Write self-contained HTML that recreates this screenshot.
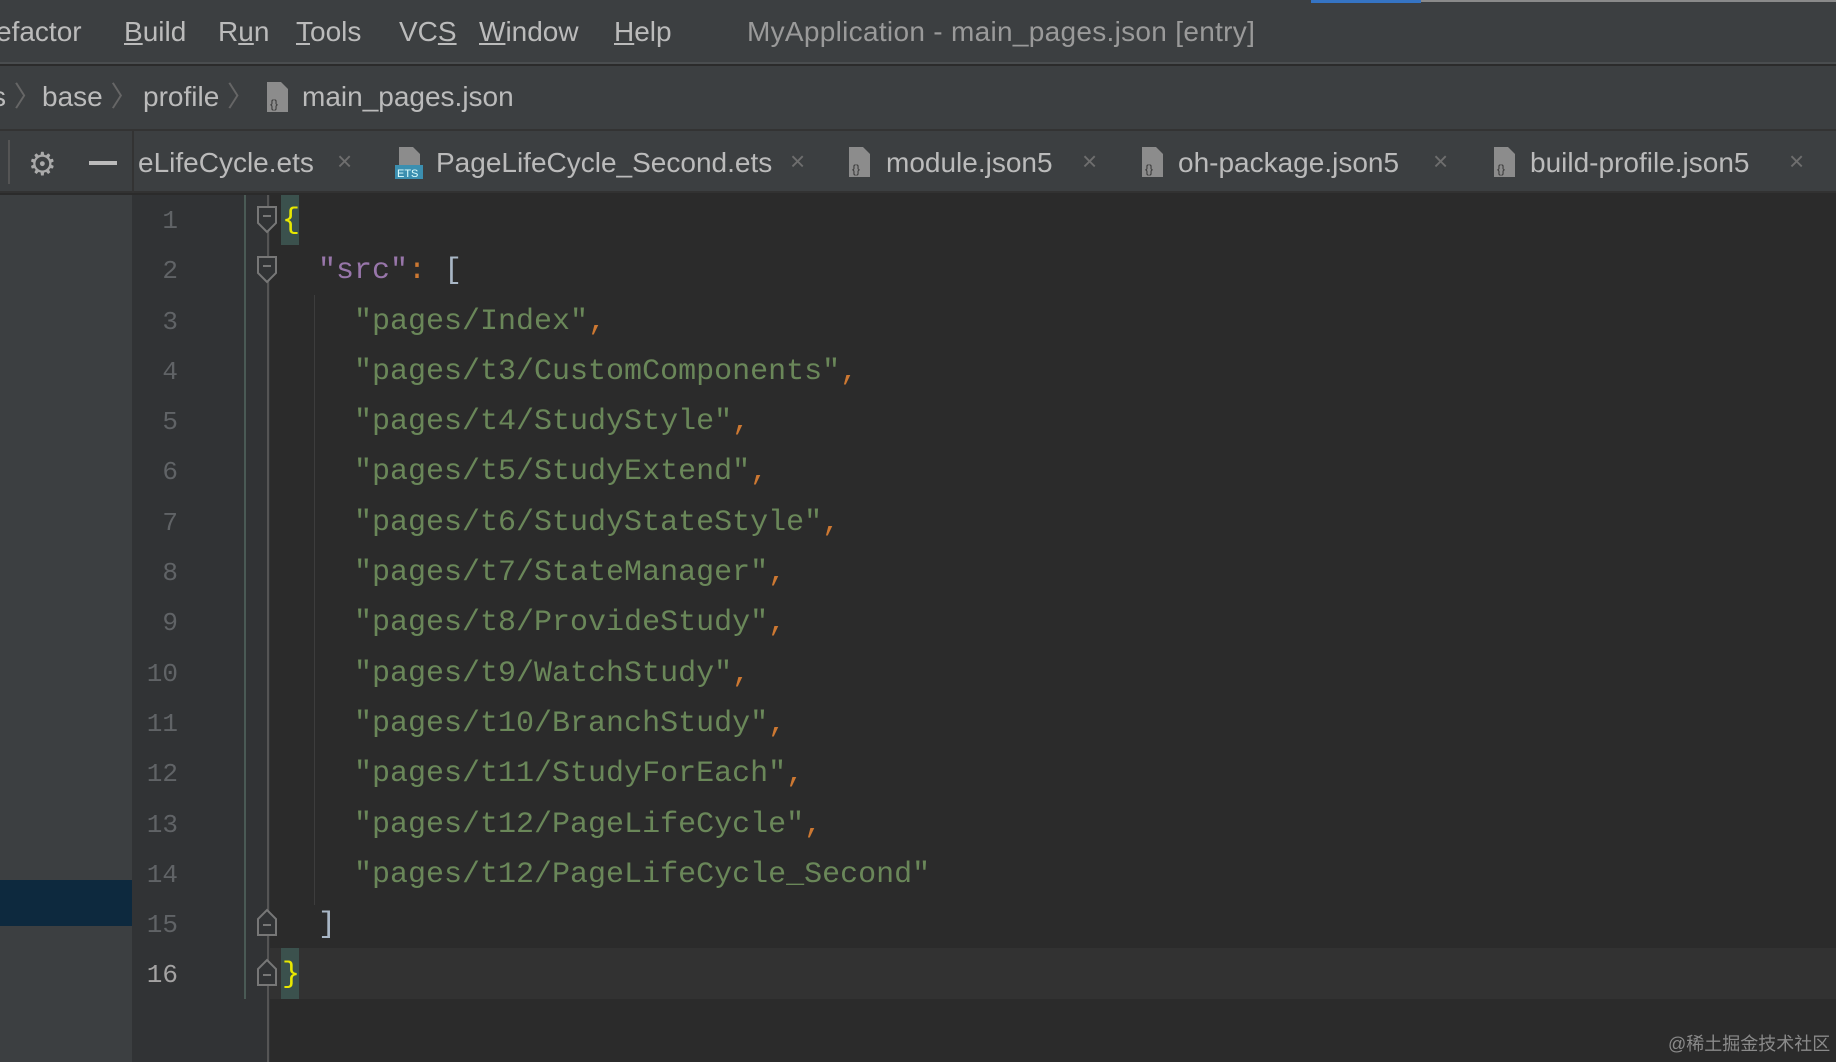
<!DOCTYPE html>
<html><head><meta charset="utf-8"><style>
*{margin:0;padding:0;box-sizing:border-box}
body{width:1836px;height:1062px;overflow:hidden;background:#2b2b2b;font-family:"Liberation Sans",sans-serif;position:relative}
.a{position:absolute;white-space:nowrap}
.ui{color:#bbbbbb;font-size:28px;line-height:34px}
.code{font-family:"Liberation Mono",monospace;font-size:30px;line-height:50.3px;white-space:pre}
.ln{color:#606366;font-family:"Liberation Mono",monospace;font-size:26px;width:60px;text-align:right}
.s{color:#6a8759}.k{color:#9876aa}.p{color:#a9b7c6}.c{color:#cc7832}
.x{color:#6e6e6e;font-size:26px}
u{text-decoration:underline}
</style></head><body>
<div class="a" style="left:0;top:0;width:1836px;height:64px;background:#3c3f41;border-bottom:2px solid #4a4d4f"></div>
<div class="a" style="left:1311px;top:0;width:110px;height:3px;background:#3574c4"></div>
<div class="a" style="left:1421px;top:0;width:415px;height:2px;background:#8a8a8a"></div>
<div class="a ui" style="left:-4px;top:15px">efactor</div>
<div class="a ui" style="left:124px;top:15px"><u>B</u>uild</div>
<div class="a ui" style="left:218px;top:15px">R<u>u</u>n</div>
<div class="a ui" style="left:296px;top:15px"><u>T</u>ools</div>
<div class="a ui" style="left:399px;top:15px">VC<u>S</u></div>
<div class="a ui" style="left:479px;top:15px"><u>W</u>indow</div>
<div class="a ui" style="left:614px;top:15px"><u>H</u>elp</div>
<div class="a ui" style="left:747px;top:15px;color:#9a9a9a;letter-spacing:0.3px">MyApplication - main_pages.json [entry]</div>

<div class="a" style="left:0;top:66px;width:1836px;height:65px;background:#3c3f41;border-bottom:2px solid #333"></div>
<div class="a ui" style="left:-8px;top:80px">s <span style="color:#666">〉</span></div>
<div class="a ui" style="left:42px;top:80px">base <span style="color:#666">〉</span></div>
<div class="a ui" style="left:143px;top:80px">profile <span style="color:#666">〉</span></div>
<svg class="a" style="left:263px;top:80px" width="30" height="34"><path d="M4 2h14l7 7v23H4z" fill="#8c8c8c"/><text x="7" y="28" font-size="12" fill="#333" font-family="Liberation Sans">{}</text></svg>
<div class="a ui" style="left:302px;top:80px">main_pages.json</div>

<div class="a" style="left:0;top:131px;width:1836px;height:62px;background:#3c3f41;border-bottom:2px solid #323232"></div>
<div class="a" style="left:8px;top:140px;width:2px;height:44px;background:#555"></div>
<div class="a" style="left:28px;top:145px;color:#aaa;font-size:32px">⚙</div>
<div class="a" style="left:89px;top:161px;width:28px;height:4px;background:#bbb"></div>
<div class="a" style="left:132px;top:131px;width:2px;height:62px;background:#333"></div>
<div class="a ui" style="left:138px;top:146px">eLifeCycle.ets</div><div class="a x" style="left:337px;top:146px">×</div>
<svg class="a" style="left:393px;top:145px" width="32" height="36"><path d="M6 2h14l7 7v14H6z" fill="#8c8c8c"/><rect x="2" y="20" width="28" height="14" fill="#3b8fb0"/><text x="4" y="32" font-size="11" fill="#dff" font-family="Liberation Sans">ETS</text></svg>
<div class="a ui" style="left:436px;top:146px">PageLifeCycle_Second.ets</div><div class="a x" style="left:790px;top:146px">×</div>
<svg class="a" style="left:845px;top:145px" width="30" height="34"><path d="M4 2h14l7 7v23H4z" fill="#8c8c8c"/><text x="7" y="28" font-size="12" fill="#333" font-family="Liberation Sans">{}</text></svg>
<div class="a ui" style="left:886px;top:146px">module.json5</div><div class="a x" style="left:1082px;top:146px">×</div>
<svg class="a" style="left:1138px;top:145px" width="30" height="34"><path d="M4 2h14l7 7v23H4z" fill="#8c8c8c"/><text x="7" y="28" font-size="12" fill="#333" font-family="Liberation Sans">{}</text></svg>
<div class="a ui" style="left:1178px;top:146px">oh-package.json5</div><div class="a x" style="left:1433px;top:146px">×</div>
<svg class="a" style="left:1490px;top:145px" width="30" height="34"><path d="M4 2h14l7 7v23H4z" fill="#8c8c8c"/><text x="7" y="28" font-size="12" fill="#333" font-family="Liberation Sans">{}</text></svg>
<div class="a ui" style="left:1530px;top:146px">build-profile.json5</div><div class="a x" style="left:1789px;top:146px">×</div>

<div class="a" style="left:0;top:195px;width:132px;height:867px;background:#3c3f41"></div>
<div class="a" style="left:0;top:880px;width:132px;height:46px;background:#0d293e"></div>
<div class="a" style="left:132px;top:195px;width:138px;height:867px;background:#313335"></div>
<div class="a" style="left:270px;top:948px;width:1566px;height:51px;background:#323232"></div>
<div class="a" style="left:244px;top:195px;width:2px;height:804px;background:#4a5a55"></div>
<div class="a" style="left:267px;top:195px;width:2px;height:867px;background:#555"></div>
<div class="a" style="left:314px;top:295px;width:1px;height:610px;background:#3d3d3d"></div>
<svg class="a" style="left:256px;top:205px" width="24" height="30"><path d="M2 2h18v16l-9 9-9-9z" fill="#313335" stroke="#777" stroke-width="2"/><path d="M7 11h8" stroke="#777" stroke-width="2"/></svg>
<svg class="a" style="left:256px;top:255px" width="24" height="30"><path d="M2 2h18v16l-9 9-9-9z" fill="#313335" stroke="#777" stroke-width="2"/><path d="M7 11h8" stroke="#777" stroke-width="2"/></svg>
<svg class="a" style="left:256px;top:907px" width="24" height="30"><path d="M2 28h18V12l-9-9-9 9z" fill="#313335" stroke="#777" stroke-width="2"/><path d="M7 18h8" stroke="#777" stroke-width="2"/></svg>
<svg class="a" style="left:256px;top:957px" width="24" height="30"><path d="M2 28h18V12l-9-9-9 9z" fill="#313335" stroke="#777" stroke-width="2"/><path d="M7 18h8" stroke="#777" stroke-width="2"/></svg>
<div class="a" style="left:281px;top:195px;width:18px;height:50px;background:#3b514d"></div>
<div class="a" style="left:281px;top:948px;width:18px;height:51px;background:#3b514d"></div>

<div class="a" style="left:118px;top:196px">
<div class="ln" style="line-height:50.3px">1<br>2<br>3<br>4<br>5<br>6<br>7<br>8<br>9<br>10<br>11<br>12<br>13<br>14<br>15<br><span style="color:#a4a3a3">16</span></div>
</div>
<div class="a code" style="left:282px;top:196px"><span style="color:#e8e800">{</span>
  <span class="k">"src"</span><span class="c">:</span> <span class="p">[</span>
    <span class="s">"pages/Index"</span><span class="c">,</span>
    <span class="s">"pages/t3/CustomComponents"</span><span class="c">,</span>
    <span class="s">"pages/t4/StudyStyle"</span><span class="c">,</span>
    <span class="s">"pages/t5/StudyExtend"</span><span class="c">,</span>
    <span class="s">"pages/t6/StudyStateStyle"</span><span class="c">,</span>
    <span class="s">"pages/t7/StateManager"</span><span class="c">,</span>
    <span class="s">"pages/t8/ProvideStudy"</span><span class="c">,</span>
    <span class="s">"pages/t9/WatchStudy"</span><span class="c">,</span>
    <span class="s">"pages/t10/BranchStudy"</span><span class="c">,</span>
    <span class="s">"pages/t11/StudyForEach"</span><span class="c">,</span>
    <span class="s">"pages/t12/PageLifeCycle"</span><span class="c">,</span>
    <span class="s">"pages/t12/PageLifeCycle_Second"</span>
  <span class="p">]</span>
<span style="color:#e8e800">}</span></div>
<div class="a" style="left:1668px;top:1030px;color:#8a8a8a;font-size:18px;font-family:'Liberation Sans','Noto Sans CJK SC',sans-serif">@稀土掘金技术社区</div>
</body></html>
